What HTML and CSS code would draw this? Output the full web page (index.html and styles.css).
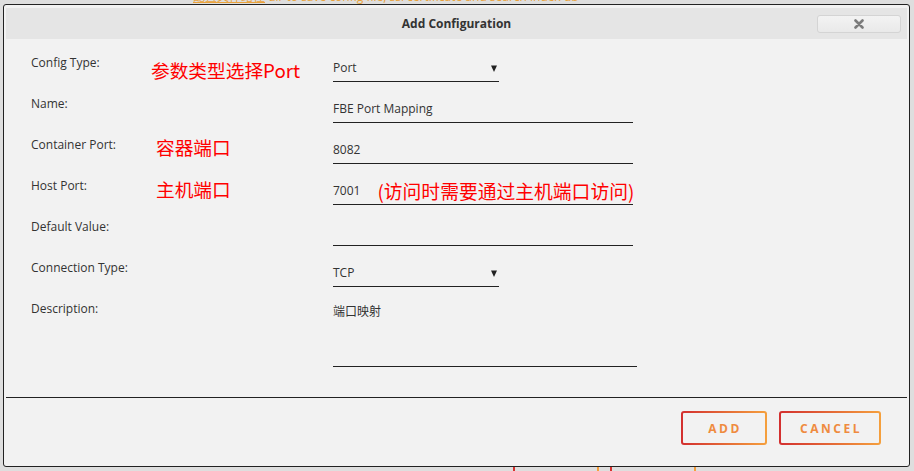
FILE: index.html
```html
<!DOCTYPE html>
<html lang="zh-CN">
<head>
<meta charset="utf-8">
<title>Add Configuration</title>
<link rel="stylesheet" href="styles.css">
</head>
<body>
  <div class="bg-note"><a>配置文件路径</a> dir to save config file, ssl certificate and search index db</div>
  <div class="bg-btn one"></div>
  <div class="bg-btn two"></div>

  <div class="dialog">
    <div class="header">
      <span></span>
      <span class="title">Add Configuration</span>
      <button class="close" type="button" aria-label="close">
        <svg width="10" height="10" viewBox="0 0 10 10"><path d="M1.5 1.5 L8.5 8.5 M8.5 1.5 L1.5 8.5" stroke="#7b7b7b" stroke-width="2.6" stroke-linecap="round"/></svg>
      </button>
    </div>

    <div class="form">
      <div class="label">Config Type:</div>
      <div class="note first">参数类型选择Port</div>
      <div class="field select"><span>Port</span><svg class="arrow" width="6" height="7" viewBox="0 0 6 7"><path d="M0 0.5 H6 L3 7 Z" fill="#222"/></svg></div>

      <div class="label">Name:</div>
      <div></div>
      <div class="field text">FBE Port Mapping</div>

      <div class="label">Container Port:</div>
      <div class="note shift mid">容器端口</div>
      <div class="field text">8082</div>

      <div class="label">Host Port:</div>
      <div class="note shift low">主机端口</div>
      <div class="field text"><span>7001</span><span class="note long">(访问时需要通过主机端口访问)</span></div>

      <div class="label">Default Value:</div>
      <div></div>
      <div class="field text"></div>

      <div class="label">Connection Type:</div>
      <div></div>
      <div class="field select"><span>TCP</span><svg class="arrow" width="6" height="7" viewBox="0 0 6 7"><path d="M0 0.5 H6 L3 7 Z" fill="#222"/></svg></div>

      <div class="label">Description:</div>
      <div></div>
      <div class="field desc">端口映射</div>
    </div>

    <div class="footer">
      <button class="btn add" type="button">ADD</button>
      <button class="btn cancel" type="button">CANCEL</button>
    </div>
  </div>
</body>
</html>
```

FILE: styles.css
```css
html, body {
  margin: 0;
}

body {
  box-sizing: border-box;
  width: 914px;
  height: 471px;
  padding: 4px 0 0 3px;
  overflow: hidden;
  position: relative;
  background: #dedede;
  font-family: "Open Sans", "Noto Sans CJK SC", sans-serif;
  font-size: 12px;
  color: #333;
}

.bg-note {
  position: absolute;
  left: 193px;
  top: -11px;
  color: #e9a23b;
  font-size: 12px;
  line-height: 16px;
  white-space: nowrap;
}

.bg-note a {
  color: inherit;
  text-decoration: underline;
}

.bg-btn {
  position: absolute;
  top: 455px;
  width: 82px;
  height: 30px;
  border: 2px solid transparent;
  border-radius: 3px;
  background: linear-gradient(#dedede, #dedede) padding-box,
              linear-gradient(to right, #d8302f, #f7a03c) border-box;
}

.bg-btn.one { left: 513px; }
.bg-btn.two { left: 610px; }

.dialog {
  position: relative;
  z-index: 1;
  box-sizing: border-box;
  width: 907px;
  height: 463px;
  border: 1px solid #222;
  border-radius: 3px;
  background: #f2f2f2;
  padding: 3px 2px 0;
  display: flex;
  flex-direction: column;
}

.header {
  height: 31px;
  background: #e5e5e5;
  display: grid;
  grid-template-columns: 1fr auto 1fr;
  align-items: center;
}

.title {
  font-weight: 700;
  font-size: 12px;
  color: #333;
}

.close {
  justify-self: end;
  margin-right: 6px;
  width: 84px;
  height: 18px;
  padding: 0;
  border: 1px solid #d4d4d4;
  border-radius: 3px;
  background: linear-gradient(#f3f3f3, #e9e9e9);
  display: flex;
  align-items: center;
  justify-content: center;
}

.form {
  flex: 1;
  padding: 12px 0 0 25px;
  display: grid;
  grid-template-columns: 120px 182px 1fr;
  grid-template-rows: repeat(6, 41px) auto;
  align-items: start;
}

.label {
  line-height: 20px;
  padding-top: 2px;
  color: #333;
}

.note {
  color: #ff0000;
  font-family: "Noto Sans CJK SC", sans-serif;
  font-size: 18.7px;
  line-height: 24px;
  white-space: nowrap;
}

.note.first { margin-top: 7px; }
.note.shift { padding-left: 5px; }
.note.mid { margin-top: 2px; }
.note.low { margin-top: 3px; }

.note.long {
  font-size: 18.8px;
  line-height: 20px;
  margin-left: 17px;
}

.field {
  box-sizing: border-box;
  height: 31px;
  padding: 7px 0 3px;
  line-height: 20px;
  border-bottom: 1px solid #222;
  color: #333;
  display: flex;
  align-items: center;
}

.field.select {
  width: 166px;
  justify-content: space-between;
  padding-right: 2px;
}

.field.text {
  width: 300px;
}

.field.desc {
  width: 304px;
  height: auto;
  padding: 5px 0 44px;
}

.footer {
  box-sizing: border-box;
  height: 69px;
  border-top: 1px solid #222;
  padding: 13px 26px 0 0;
  display: flex;
  justify-content: flex-end;
  align-items: flex-start;
  gap: 12px;
}

.btn {
  box-sizing: border-box;
  height: 34px;
  border: 2px solid transparent;
  border-radius: 3px;
  background: linear-gradient(#f2f2f2, #f2f2f2) padding-box,
              linear-gradient(to right, #d32f2f, #f5a03d) border-box;
  color: #ef8b3f;
  font-family: "Open Sans", sans-serif;
  font-weight: 700;
  font-size: 12px;
  letter-spacing: 2.5px;
  padding: 0 0 0 2px;
}

.btn.add { width: 86px; }
.btn.cancel { width: 102px; }
```
